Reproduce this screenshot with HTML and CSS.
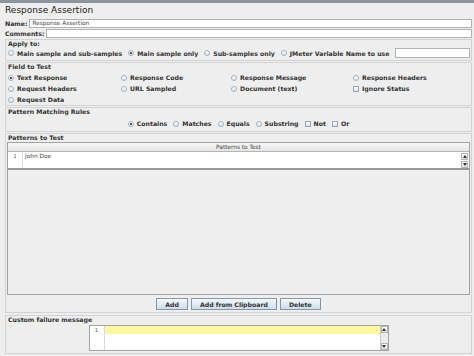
FILE: index.html
```html
<!DOCTYPE html>
<html lang="en">
<head>
  <meta charset="UTF-8">
  <meta name="viewport" content="width=device-width, initial-scale=1.0">
  <title>Response Assertion</title>
  <link rel="stylesheet" href="styles.css">
</head>
<body>

  <div class="topbar"></div>
  <h1 class="title">Response Assertion</h1>

  <div class="field-row">
    <label>Name:</label>
    <div class="text-input">Response Assertion</div>
  </div>
  <div class="field-row">
    <label>Comments:</label>
    <div class="text-input"></div>
  </div>

  <section class="panel apply">
    <div class="panel-title">Apply to:</div>
    <div class="options">
      <span class="opt"><i class="radio"></i>Main sample and sub-samples</span>
      <span class="opt"><i class="radio on"></i>Main sample only</span>
      <span class="opt"><i class="radio"></i>Sub-samples only</span>
      <span class="opt"><i class="radio"></i>JMeter Variable Name to use</span>
      <div class="text-input var-name"></div>
    </div>
  </section>

  <section class="panel field">
    <div class="panel-title">Field to Test</div>
    <div class="field-grid">
      <span class="opt"><i class="radio on"></i>Text Response</span>
      <span class="opt"><i class="radio"></i>Response Code</span>
      <span class="opt"><i class="radio"></i>Response Message</span>
      <span class="opt"><i class="radio"></i>Response Headers</span>
      <span class="opt"><i class="radio"></i>Request Headers</span>
      <span class="opt"><i class="radio"></i>URL Sampled</span>
      <span class="opt"><i class="radio"></i>Document (text)</span>
      <span class="opt"><i class="check"></i>Ignore Status</span>
      <span class="opt"><i class="radio"></i>Request Data</span>
    </div>
  </section>

  <section class="panel rules">
    <div class="panel-title">Pattern Matching Rules</div>
    <div class="rule-row">
      <span class="opt"><i class="radio on"></i>Contains</span>
      <span class="opt"><i class="radio"></i>Matches</span>
      <span class="opt"><i class="radio"></i>Equals</span>
      <span class="opt"><i class="radio"></i>Substring</span>
      <span class="opt"><i class="check"></i>Not</span>
      <span class="opt"><i class="check"></i>Or</span>
    </div>
  </section>

  <section class="panel patterns">
    <div class="panel-title">Patterns to Test</div>
    <div class="table">
      <div class="table-head">Patterns to Test</div>
      <div class="table-row">
        <div class="gutter">1</div>
        <div class="cell-text">John Doe</div>
        <div class="spin">
          <span class="arrow-btn"><svg width="4" height="3" viewBox="0 0 4 3"><polygon points="0,3 2,0 4,3" fill="#333"/></svg></span>
          <span class="arrow-btn"><svg width="4" height="3" viewBox="0 0 4 3"><polygon points="0,0 4,0 2,3" fill="#333"/></svg></span>
        </div>
      </div>
      <div class="table-empty"></div>
    </div>
    <div class="buttons">
      <button>Add</button>
      <button>Add from Clipboard</button>
      <button>Delete</button>
    </div>
  </section>

  <section class="panel failure">
    <div class="panel-title">Custom failure message</div>
    <div class="editor">
      <div class="gutter">1</div>
      <div class="editor-body">
        <div class="current-line"></div>
      </div>
      <div class="editor-scroll">
        <span class="arrow-btn"><svg width="4" height="3" viewBox="0 0 4 3"><polygon points="0,3 2,0 4,3" fill="#333"/></svg></span>
        <span class="arrow-btn"><svg width="4" height="3" viewBox="0 0 4 3"><polygon points="0,0 4,0 2,3" fill="#333"/></svg></span>
      </div>
    </div>
  </section>

</body>
</html>
```

FILE: styles.css
```css
* {
  box-sizing: border-box;
}
body {
  margin: 0;
  width: 474px;
  height: 356px;
  overflow: hidden;
  background: #eeeeee;
  color: #333;
  font-family: 'DejaVu Sans', sans-serif;
  font-size: 6.2px;
  font-weight: bold;
}
.topbar {
  height: 3px;
  background: #8d959e;
}
.title {
  margin: 0;
  padding: 0 5px;
  font-size: 9px;
  font-weight: normal;
  line-height: 15px;
  color: #222;
}
.field-row {
  display: flex;
  align-items: center;
  gap: 2px;
  height: 9px;
  margin: 1px 2px 0 5px;
}
.text-input {
  flex: 1;
  height: 9px;
  background: #fff;
  border: 1px solid #b2b2b2;
  padding-left: 2px;
  font-size: 5.8px;
  font-weight: normal;
  line-height: 7px;
  color: #444;
}

/* titled panels */
.panel {
  border: 1px solid #d3d3d3;
  margin: 1px 2px 0 5px;
}
.panel-title {
  padding-left: 2px;
  line-height: 7px;
  color: #333;
}
.opt {
  display: inline-flex;
  align-items: center;
  gap: 3px;
  white-space: nowrap;
}
.radio {
  display: inline-block;
  width: 6px;
  height: 6px;
  border-radius: 50%;
  border: 1px solid #a0b0c0;
  background: linear-gradient(#ffffff, #dce6f0);
  position: relative;
}
.radio.on::after {
  content: '';
  position: absolute;
  left: 1px;
  top: 1px;
  width: 2px;
  height: 2px;
  border-radius: 50%;
  background: #222;
}
.check {
  display: inline-block;
  width: 6px;
  height: 6px;
  border: 1px solid #97a5b4;
  background: linear-gradient(#ffffff, #d8e2ed);
}

.apply .options {
  display: flex;
  align-items: center;
  gap: 6px;
  height: 10px;
  margin: 1px 0 2px;
  padding: 0 1px 0 2px;
}
.apply .var-name {
  height: 10px;
  margin-left: -1px;
}

.field-grid {
  display: grid;
  grid-template-columns: 113px 110px 122px 1fr;
  grid-auto-rows: 11px;
  align-items: center;
  margin-top: 2px;
  padding: 0 2px;
}

.rule-row {
  display: flex;
  justify-content: center;
  align-items: center;
  gap: 6px;
  height: 11px;
  margin: 3px 0 2px;
}

/* patterns table */
.patterns .panel-title {
  margin-bottom: 1px;
}
.table {
  margin: 0 1px;
  height: 153px;
  border: 1px solid #a2a2a2;
  display: flex;
  flex-direction: column;
}
.table-head {
  height: 9px;
  background: linear-gradient(#f6f6f6, #e6e6e6);
  border-bottom: 1px solid #b4b4b4;
  text-align: center;
  font-size: 5.8px;
  font-weight: normal;
  line-height: 8px;
  color: #444;
}
.table-row {
  display: flex;
  height: 18px;
  background: #fff;
  border-bottom: 2px solid #9a9a9a;
}
.gutter {
  width: 15px;
  border-right: 1px solid #dcdcdc;
  text-align: center;
  font-size: 5.5px;
  font-weight: normal;
  line-height: 9px;
  color: #666;
}
.cell-text {
  flex: 1;
  padding-left: 2px;
  font-size: 5.8px;
  font-weight: normal;
  line-height: 9px;
  color: #444;
}
.spin {
  display: flex;
  flex-direction: column;
  justify-content: space-between;
  padding: 1px 1px 0 0;
}
.arrow-btn {
  display: flex;
  align-items: center;
  justify-content: center;
  width: 7px;
  height: 7px;
  border: 1px solid #b4b4b4;
  background: linear-gradient(#ffffff, #e2e2e2);
}
.table-empty {
  flex: 1;
}
.buttons {
  display: flex;
  justify-content: center;
  gap: 3px;
  margin: 3px 0 2px;
}
.buttons button {
  height: 12px;
  padding: 0 8px;
  border: 1px solid #8597aa;
  background: linear-gradient(#f4f8fc, #cfdcea);
  font-family: inherit;
  font-size: 6.2px;
  font-weight: bold;
  color: #333;
}

/* custom failure message */
.failure {
  margin-top: 2px;
}
.failure .panel-title {
  margin-bottom: 2px;
}
.editor {
  display: flex;
  width: 300px;
  height: 26px;
  margin: 0 auto 2px;
  background: #fff;
  border: 1px solid #a2a2a2;
}
.editor .gutter {
  line-height: 8px;
}
.editor-body {
  flex: 1;
}
.current-line {
  height: 8px;
  background: #fdf7a0;
}
.editor-scroll {
  display: flex;
  flex-direction: column;
  justify-content: space-between;
  width: 8px;
  background: #ececec;
  border-left: 1px solid #c9c9c9;
}
```
